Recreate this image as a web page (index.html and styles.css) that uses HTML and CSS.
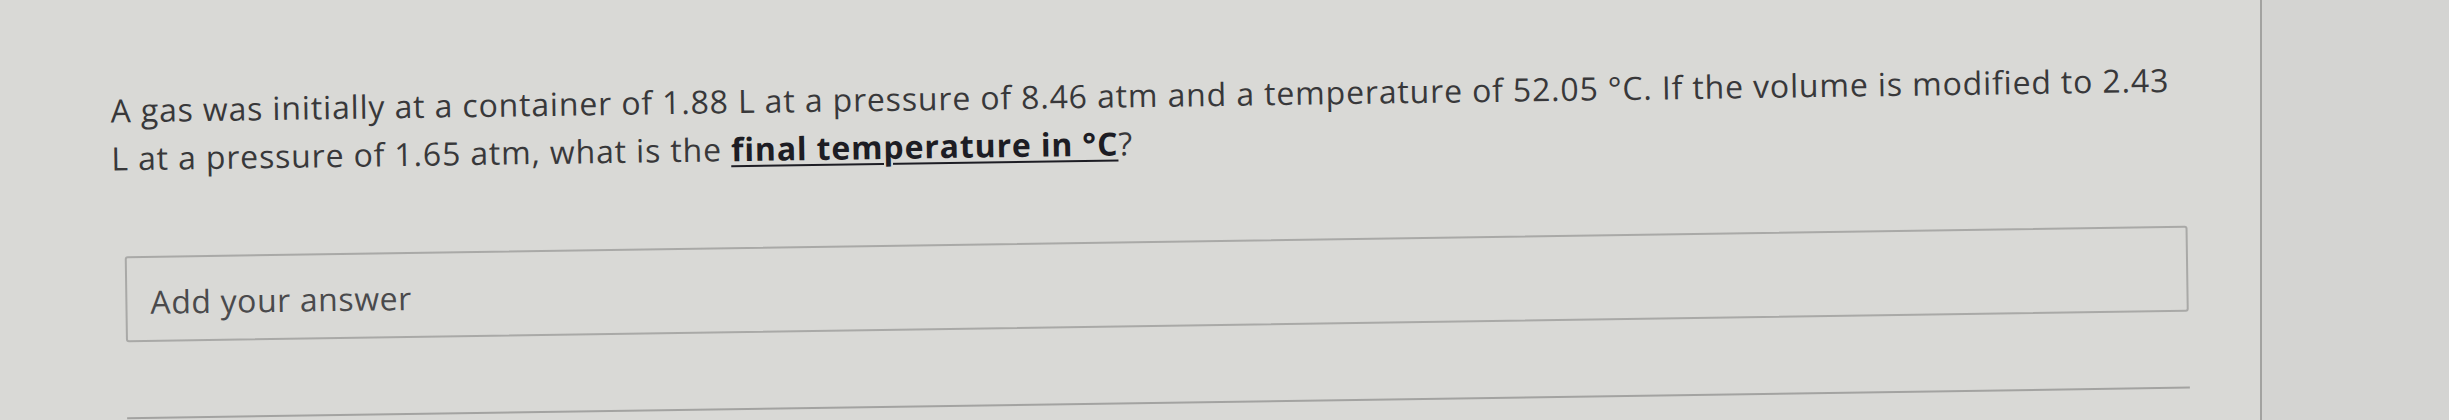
FILE: index.html
```html
<!DOCTYPE html>
<html>
<head>
<meta charset="utf-8">
<link rel="stylesheet" href="styles.css">
</head>
<body>
<div class="page">
  <main class="panel">
    <div class="content">
      <p class="question">A gas was initially at a container of 1.88 L at a pressure of 8.46 atm and a temperature of 52.05 °C. If the volume is modified to 2.43 L at a pressure of 1.65 atm, what is the <strong class="key">final temperature in °C</strong>?</p>
      <div class="answer">Add your answer</div>
      <div class="separator"></div>
    </div>
  </main>
  <aside class="side"></aside>
</div>
</body>
</html>
```
FILE: styles.css
```css
html, body {
  margin: 0;
  padding: 0;
  height: 100%;
  overflow: hidden;
}
body {
  background: #d7d7d4;
  font-family: "Open Sans", "Noto Sans", sans-serif;
  color: #38383a;
}
.page {
  display: flex;
  height: 420px;
}
.panel {
  width: 2262px;
  flex: none;
  background: #d9d9d6;
  border-right: 2px solid #a2a2a0;
  box-sizing: border-box;
}
.side {
  flex: 1;
  background: #d4d4d2;
}
.content {
  padding: 71px 0 0 112px;
  width: 2075px;
  transform: rotate(-0.85deg);
  transform-origin: 1150px 200px;
}
.question {
  margin: 0;
  width: 2076px;
  font-size: 32px;
  line-height: 48px;
  letter-spacing: 0.85px;
}
.key {
  font-weight: 700;
  color: #1d1d24;
  text-decoration: underline;
  text-decoration-thickness: 2px;
  text-underline-offset: 4px;
}
.answer {
  margin: 74px 0 0 12px;
  height: 86px;
  border: 2px solid #a9a9a7;
  border-radius: 3px;
  box-sizing: border-box;
  display: flex;
  align-items: center;
  padding: 4px 0 0 23px;
  font-size: 32px;
  letter-spacing: 0.6px;
  color: #4a4a4c;
}
.separator {
  margin: 75px 0 0 12px;
  height: 2px;
  background: #a3a3a1;
}
```
